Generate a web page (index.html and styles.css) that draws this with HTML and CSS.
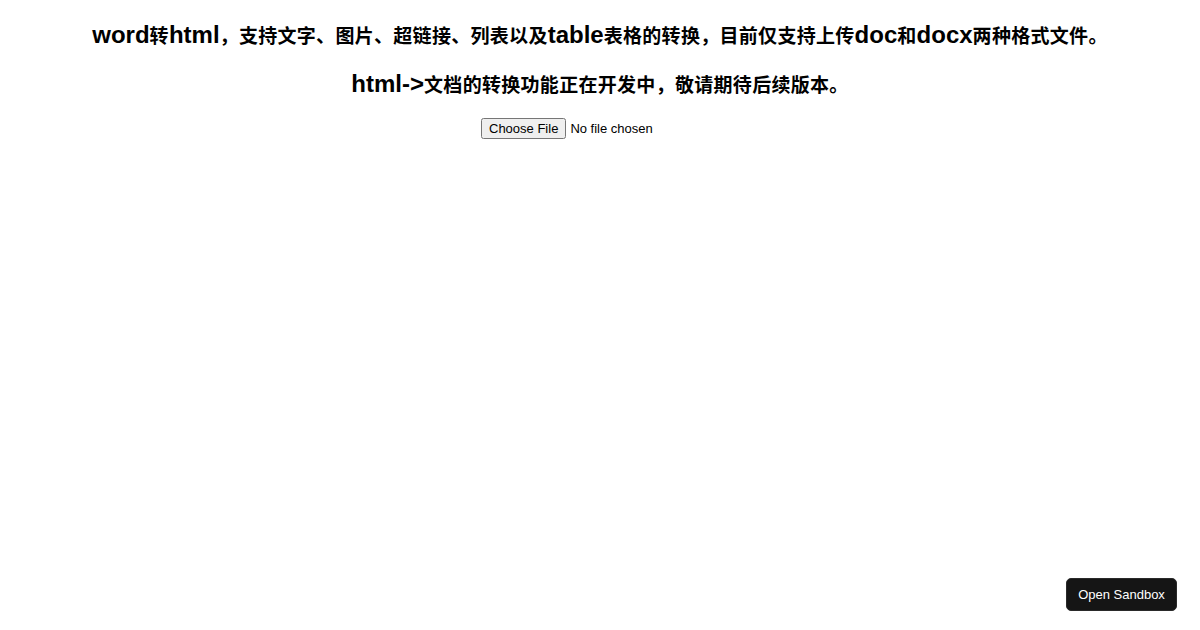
FILE: index.html
```html
<!DOCTYPE html>
<html lang="zh-CN">
<head>
<meta charset="utf-8">
<title>word转html</title>
<link rel="stylesheet" href="styles.css">
</head>
<body>
  <main class="page">
    <h2 class="title">word<span class="zh">转</span>html<span class="zh">，支持文字、图片、超链接、列表以及</span>table<span class="zh">表格的转换，目前仅支持上传</span>doc<span class="zh">和</span>docx<span class="zh">两种格式文件。</span></h2>
    <h2 class="title">html-&gt;<span class="zh">文档的转换功能正在开发中，敬请期待后续版本。</span></h2>
    <div class="upload">
      <input class="file" type="file" accept=".doc,.docx">
    </div>
  </main>
  <a class="sandbox-btn" href="#">Open Sandbox</a>
</body>
</html>
```

FILE: styles.css
```css
html, body {
  background: #ffffff;
}

body {
  margin: 0 8px 8px;
  font-family: "Liberation Sans", Arial, "Noto Sans CJK SC", sans-serif;
  color: #000;
}

.page {
  text-align: center;
}

.title {
  font-size: 24px;
  font-weight: bold;
  line-height: 29px;
  margin: 20px 0;
  white-space: nowrap;
}

.zh {
  font-family: "Noto Sans CJK SC", sans-serif;
  font-size: 19px;
  font-weight: bold;
  line-height: 0;
  letter-spacing: 0.3px;
}

.upload {
  text-align: center;
}

.file {
  font-family: "Liberation Sans", Arial, sans-serif;
  font-size: 13px;
  width: 238px;
  color: #000;
}

.sandbox-btn {
  position: fixed;
  right: 23px;
  bottom: 19px;
  display: flex;
  align-items: center;
  justify-content: center;
  width: 111px;
  height: 33px;
  box-sizing: border-box;
  background: #151515;
  color: #ffffff;
  border: 1px solid #2a2a2a;
  border-radius: 5px;
  font-family: "Liberation Sans", Arial, sans-serif;
  font-size: 13px;
  text-decoration: none;
}
```
